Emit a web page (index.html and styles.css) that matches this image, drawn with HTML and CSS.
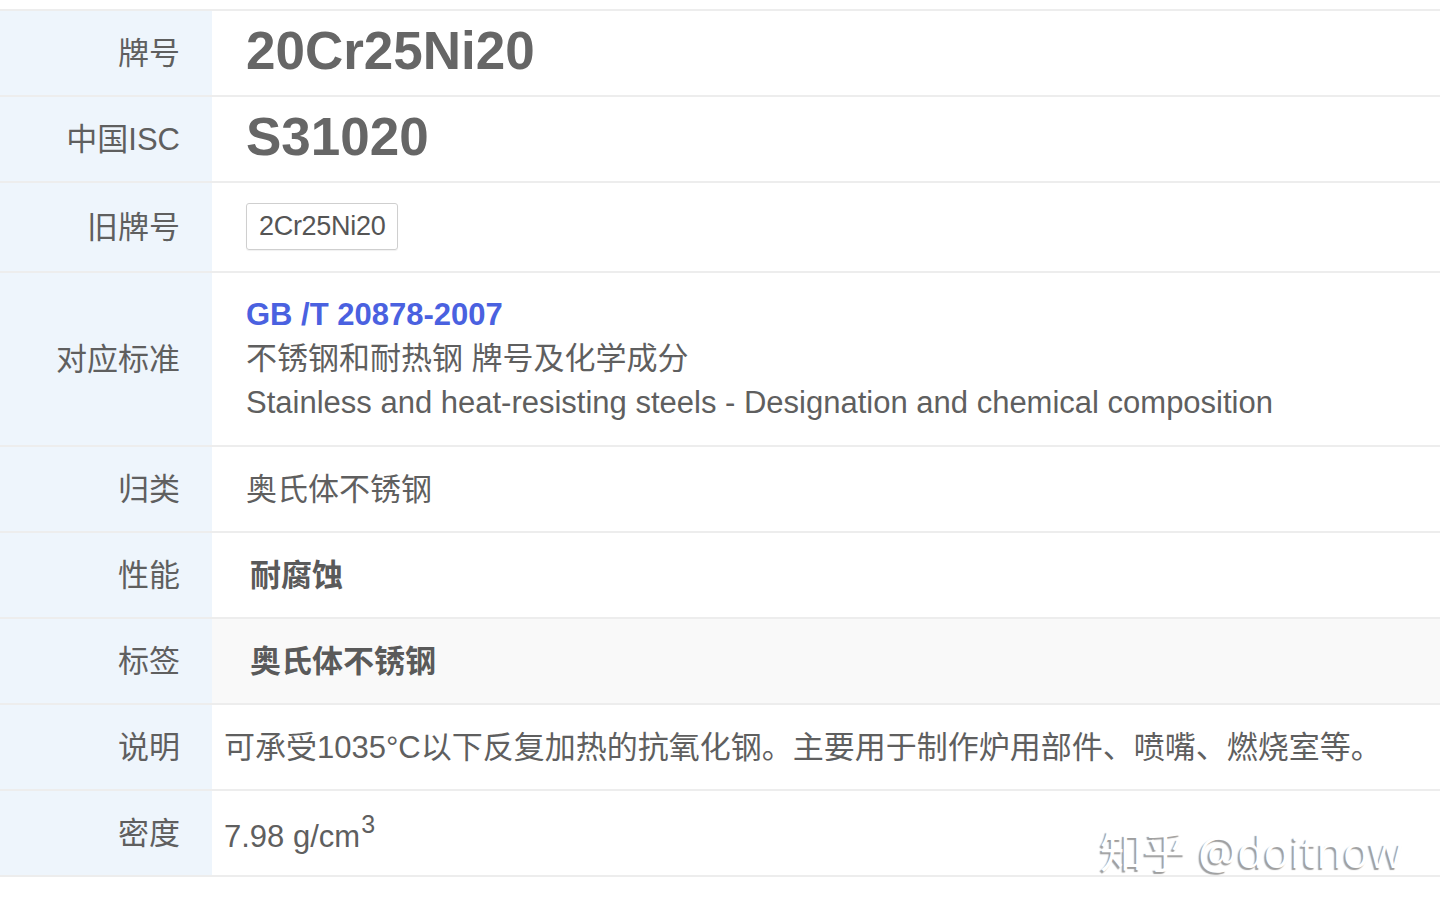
FILE: index.html
```html
<!DOCTYPE html>
<html lang="zh-CN">
<head>
<meta charset="utf-8">
<title>20Cr25Ni20</title>
<link rel="stylesheet" href="styles.css">
</head>
<body>
<div class="page">
  <div class="table">
    <div class="row">
      <div class="label">牌号</div>
      <div class="value"><span class="title">20Cr25Ni20</span></div>
    </div>
    <div class="row">
      <div class="label">中国ISC</div>
      <div class="value"><span class="title">S31020</span></div>
    </div>
    <div class="row row-old">
      <div class="label">旧牌号</div>
      <div class="value"><span class="chip">2Cr25Ni20</span></div>
    </div>
    <div class="row row-std">
      <div class="label">对应标准</div>
      <div class="value stack">
        <a class="std-link" href="#">GB /T 20878-2007</a>
        <span>不锈钢和耐热钢 牌号及化学成分</span>
        <span>Stainless and heat-resisting steels - Designation and chemical composition</span>
      </div>
    </div>
    <div class="row">
      <div class="label">归类</div>
      <div class="value">奥氏体不锈钢</div>
    </div>
    <div class="row">
      <div class="label">性能</div>
      <div class="value"><span class="strong">耐腐蚀</span></div>
    </div>
    <div class="row row-gray">
      <div class="label">标签</div>
      <div class="value"><span class="strong">奥氏体不锈钢</span></div>
    </div>
    <div class="row">
      <div class="label">说明</div>
      <div class="value tight">可承受1035°C以下反复加热的抗氧化钢。主要用于制作炉用部件、喷嘴、燃烧室等。</div>
    </div>
    <div class="row row-last">
      <div class="label">密度</div>
      <div class="value tight density">7.98 g/cm<sup>3</sup></div>
    </div>
  </div>
  <div class="watermark">知乎 @doitnow</div>
</div>
</body>
</html>
```

FILE: styles.css
```css
html, body {
  margin: 0;
  padding: 0;
  background: #ffffff;
}

body {
  font-family: "Liberation Sans", Arial, "Noto Sans CJK SC", sans-serif;
  color: #5e5e5e;
}

.page {
  position: relative;
  width: 1440px;
  height: 914px;
  padding-top: 9px;
  box-sizing: border-box;
  overflow: hidden;
}

.table {
  display: flex;
  flex-direction: column;
}

.row {
  display: grid;
  grid-template-columns: 212px 1fr;
  height: 86px;
  border-top: 2px solid #ededed;
  box-sizing: border-box;
}

.row-old {
  height: 90px;
}

.row-std {
  height: 174px;
}

.row-last {
  border-bottom: 2px solid #ededed;
  height: 88px;
}

.label {
  background: #eef5fc;
  display: flex;
  align-items: center;
  justify-content: flex-end;
  padding-right: 32px;
  padding-bottom: 6px;
  font-size: 31px;
  color: #5f5f5f;
}

.value {
  display: flex;
  align-items: center;
  padding-left: 34px;
  padding-bottom: 6px;
  font-size: 31px;
  color: #5f5f5f;
}

.row-gray .value {
  background: #f9f9f9;
}

.value.tight {
  padding-left: 12px;
}

.value.density {
  padding-bottom: 0;
  padding-top: 8px;
}

.title {
  font-size: 53px;
  font-weight: bold;
  color: #666666;
}

.row-old .value {
  padding-bottom: 2px;
}

.chip {
  display: inline-block;
  border: 1px solid #cfcfcf;
  border-radius: 3px;
  padding: 0 12px;
  line-height: 45px;
  font-size: 27px;
  color: #555555;
  letter-spacing: -0.3px;
  box-shadow: 0 1px 1px rgba(0, 0, 0, 0.06);
}

.stack {
  flex-direction: column;
  align-items: flex-start;
  justify-content: center;
  line-height: 44px;
  padding-bottom: 0;
}

.std-link {
  color: #4a61e0;
  font-weight: bold;
  text-decoration: none;
}

.strong {
  font-weight: bold;
  padding-left: 4px;
  color: #5a5a5a;
}

sup {
  font-size: 25px;
  line-height: 0;
  vertical-align: 0;
  position: relative;
  top: -13px;
  margin-left: 1px;
}

.watermark {
  position: absolute;
  right: 37px;
  top: 818px;
  font-family: "Open Sans", "Noto Sans CJK SC", sans-serif;
  font-size: 43.5px;
  font-weight: 400;
  color: #ffffff;
  text-shadow: -2px 2px 1px rgba(0, 0, 0, 0.38);
}
```
